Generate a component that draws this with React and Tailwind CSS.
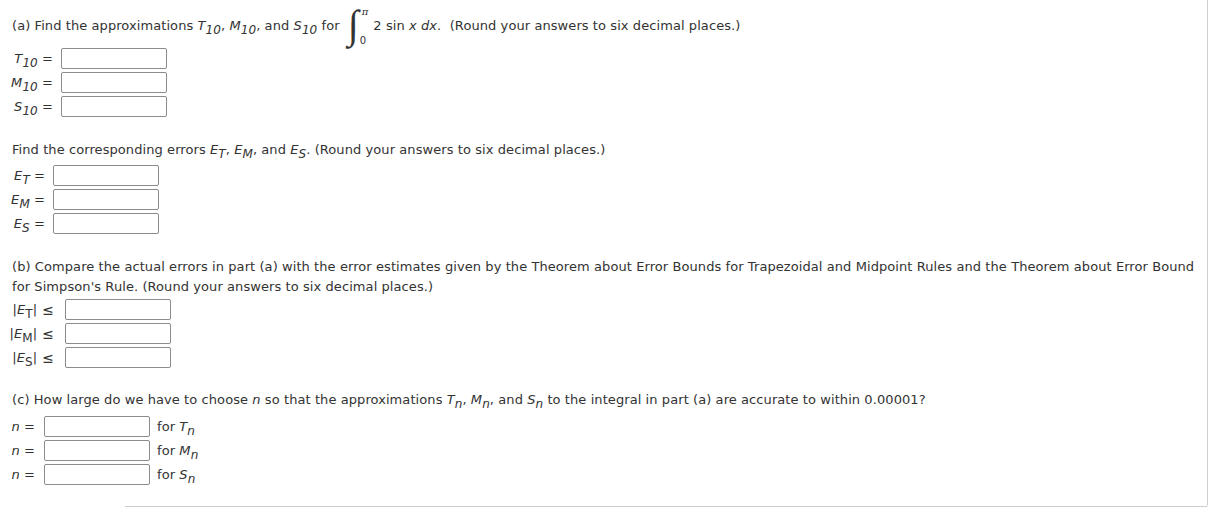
import React from 'react';

const V = ({ children, sub }) => (
  <span className="whitespace-nowrap">
    <span className="italic">{children}</span>
    {sub && <span className="relative top-[4px] text-[12px] italic">{sub}</span>}
  </span>
);

const Box = () => (
  <div className="w-[106px] h-[21px] border border-[#8c8c8c] rounded-[2px] bg-white" />
);

const Row = ({ label, labelW, gap, after }) => (
  <div className="flex h-[24px]">
    <div className={`h-[21px] flex items-center justify-end whitespace-nowrap ${labelW}`}>{label}</div>
    <div className={gap}>
      <Box />
    </div>
    {after && <div className="ml-[7px] h-[21px] flex items-center whitespace-nowrap">{after}</div>}
  </div>
);

const Integral = () => (
  <span className="inline-flex h-[46px] ml-[8px] mr-[5px]">
    <span className="text-[40px] leading-[46px] font-['Liberation_Serif',serif] font-light -mt-[1px]">∫</span>
    <span className="flex flex-col justify-between text-[10px] leading-[12px] pt-[3px] pb-[2px]">
      <span className="italic font-['DejaVu_Serif',serif] ml-[3px]">π</span>
      <span className="ml-[1px]">0</span>
    </span>
  </span>
);

const LeSign = () => <span className="text-[14px] leading-[14px] ml-[5px]">≤</span>;

const App = () => {
  return (
    <div className="w-[1212px] h-[509px] bg-white font-['DejaVu_Sans',Verdana,sans-serif] text-[13px] tracking-[0.08px] text-[#333]">
      <div className="w-[1208px] h-[507px] border-r border-[#cfcfcf] rounded-br-[3px] flex flex-col pl-[12px]">
        {/* part a */}
        <div className="mt-[3px] h-[45px] flex items-center whitespace-nowrap">
          <span>
            (a) Find the approximations <V sub="10">T</V>, <V sub="10">M</V>, and <V sub="10">S</V> for
          </span>
          <Integral />
          <span>
            2 sin <span className="italic">x dx</span>. &nbsp;(Round your answers to six decimal places.)
          </span>
        </div>
        <div className="flex flex-col">
          <Row label={<span><V sub="10">T</V> =</span>} labelW="w-[41px]" gap="ml-[8px]" />
          <Row label={<span><V sub="10">M</V> =</span>} labelW="w-[41px]" gap="ml-[8px]" />
          <Row label={<span><V sub="10">S</V> =</span>} labelW="w-[41px]" gap="ml-[8px]" />
        </div>

        <p className="mt-[20px] leading-[20px]">
          Find the corresponding errors <V sub="T">E</V>, <V sub="M">E</V>, and <V sub="S">E</V>. (Round your answers to six decimal places.)
        </p>
        <div className="mt-[5px] flex flex-col">
          <Row label={<span><V sub="T">E</V> =</span>} labelW="w-[33px]" gap="ml-[8px]" />
          <Row label={<span><V sub="M">E</V> =</span>} labelW="w-[33px]" gap="ml-[8px]" />
          <Row label={<span><V sub="S">E</V> =</span>} labelW="w-[33px]" gap="ml-[8px]" />
        </div>

        {/* part b */}
        <p className="mt-[20px] leading-[20px] pr-[10px]">
          (b) Compare the actual errors in part (a) with the error estimates given by the Theorem about Error Bounds for Trapezoidal and Midpoint Rules and the Theorem about Error Bound for Simpson's Rule. (Round your answers to six decimal places.)
        </p>
        <div className="mt-[2px] flex flex-col">
          <Row label={<span className="flex items-center">|<V sub={<span className="not-italic">T</span>}>E</V>|<LeSign /></span>} labelW="w-[42px]" gap="ml-[11px]" />
          <Row label={<span className="flex items-center">|<V sub={<span className="not-italic">M</span>}>E</V>|<LeSign /></span>} labelW="w-[42px]" gap="ml-[11px]" />
          <Row label={<span className="flex items-center">|<V sub={<span className="not-italic">S</span>}>E</V>|<LeSign /></span>} labelW="w-[42px]" gap="ml-[11px]" />
        </div>

        {/* part c */}
        <p className="mt-[19px] leading-[20px]">
          (c) How large do we have to choose <span className="italic">n</span> so that the approximations <V sub="n">T</V>, <V sub="n">M</V>, and <V sub="n">S</V> to the integral in part (a) are accurate to within 0.00001?
        </p>
        <div className="mt-[6px] flex flex-col">
          <Row label={<span><span className="italic">n</span> =</span>} labelW="w-[23px]" gap="ml-[9px]" after={<span>for <V sub="n">T</V></span>} />
          <Row label={<span><span className="italic">n</span> =</span>} labelW="w-[23px]" gap="ml-[9px]" after={<span>for <V sub="n">M</V></span>} />
          <Row label={<span><span className="italic">n</span> =</span>} labelW="w-[23px]" gap="ml-[9px]" after={<span>for <V sub="n">S</V></span>} />
        </div>
        <div className="flex-1" />
        <div className="ml-[113px] h-px bg-[#cfcfcf]" />
      </div>
    </div>
  );
};

export default App;
